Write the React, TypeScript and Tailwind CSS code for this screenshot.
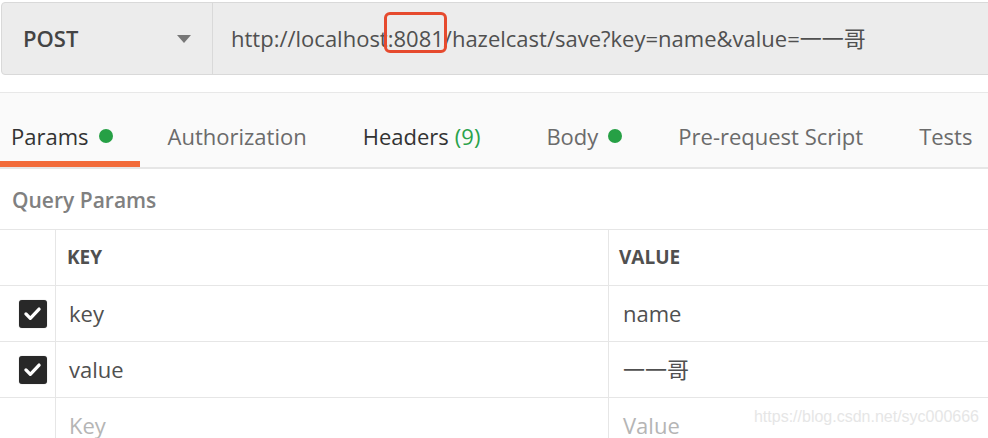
import React from 'react';

const font = { fontFamily: '"Open Sans", "Noto Sans CJK SC", sans-serif' };

const tabs = [
    { label: 'Params', dot: true, active: true },
    { label: 'Authorization' },
    { label: 'Headers', count: '(9)' },
    { label: 'Body', dot: true },
    { label: 'Pre-request Script' },
    { label: 'Tests' },
];

const rows = [
    { key: 'key', value: 'name', checked: true },
    { key: 'value', value: '一一哥', checked: true },
    { key: 'Key', value: 'Value', placeholder: true },
];

const Checkbox = () => (
    <div className="w-[28px] h-[28px] rounded-[3px] bg-[#282828] flex items-center justify-center shadow-[0_0_1px_rgba(0,0,0,0.4)]">
        <svg viewBox="0 0 24 24" className="w-[21px] h-[21px]" fill="none" stroke="white" strokeWidth="3.8" strokeLinecap="round" strokeLinejoin="round">
            <polyline points="4.5 12.5 9.5 17.5 19.5 7" />
        </svg>
    </div>
);

export default function App() {
    return (
        <div className="relative w-[988px] h-[438px] overflow-hidden bg-white" style={font}>
            {/* request bar */}
            <div className="pt-[2px] pl-[1px] h-[92px]">
                <div className="flex h-[73px] w-[1000px] bg-[#ececec] border border-[#d9d9d9] rounded-l-[4px]">
                    <div className="w-[211px] flex items-center justify-between pl-[21px] pr-[21px] border-r border-[#d9d9d9]">
                        <span className="text-[22px] font-semibold text-[#444]">POST</span>
                        <svg viewBox="0 0 14 8" className="w-[14px] h-[8px]">
                            <polygon points="0,0 14,0 7,8" fill="#777" />
                        </svg>
                    </div>
                    <div className="flex items-center pl-[18px] text-[22px] text-[#505050] whitespace-nowrap">
                        <span>http://localhost</span>
                        <span className="relative">
                            :8081
                            <span className="absolute -left-[4px] -right-[3px] -top-[10px] bottom-[2px] border-[3px] border-[#e64a2e] rounded-[6px]" />
                        </span>
                        <span>/hazelcast/save?key=name&amp;value=一一哥</span>
                    </div>
                </div>
            </div>

            {/* tabs */}
            <div className="flex h-[77px] bg-[#fafafa] border-t border-[#e8e8e8] border-b-2 border-b-[#e6e6e6] whitespace-nowrap">
                {tabs.map((t, i) => (
                    <div
                        key={t.label}
                        className={
                            i === 0
                                ? 'shrink-0 flex items-center h-full pt-[18px] pl-[11px] pr-[27px] border-b-[6px] border-[#f26b3a]'
                                : t.count
                                ? 'shrink-0 flex items-center h-full pt-[18px] pb-[6px] pl-[28px] pr-[38px]'
                                : 'shrink-0 flex items-center h-full pt-[18px] pb-[6px] px-[28px]'
                        }
                    >
                        <span className={`text-[22px] ${t.active || t.label === 'Headers' ? 'text-[#333]' : 'text-[#6b6b6b]'}`}>
                            {t.label}
                        </span>
                        {t.count && <span className="text-[22px] text-[#2aa24b] ml-[6px]">{t.count}</span>}
                        {t.dot && <span className="ml-[10px] w-[14px] h-[14px] rounded-full bg-[#26a045]" />}
                    </div>
                ))}
            </div>

            {/* query params */}
            <div className="h-[60px] flex items-center pl-[12px] pt-[3px]">
                <span className="text-[21px] font-semibold text-[#808080]">Query Params</span>
            </div>

            <div className="border-t border-[#e6e6e6]">
                <div className="grid grid-cols-[56px_553px_1fr] h-[56px] border-b border-[#e6e6e6]">
                    <div className="border-r border-[#e6e6e6]" />
                    <div className="flex items-center pl-[11px] border-r border-[#e6e6e6] text-[19px] font-bold text-[#505050]">KEY</div>
                    <div className="flex items-center pl-[10px] text-[19px] font-bold text-[#505050]">VALUE</div>
                </div>
                {rows.map((r, i) => (
                    <div key={i} className="grid grid-cols-[56px_553px_1fr] h-[56px] border-b border-[#e6e6e6]">
                        <div className="flex items-center justify-center pl-[10px] border-r border-[#e6e6e6]">
                            {r.checked && <Checkbox />}
                        </div>
                        <div className={`flex items-center pl-[13px] border-r border-[#e6e6e6] text-[22px] ${r.placeholder ? 'text-[#b5b5b5]' : 'text-[#505050]'}`}>
                            {r.key}
                        </div>
                        <div className={`flex items-center pl-[14px] text-[22px] ${r.placeholder ? 'text-[#b5b5b5]' : 'text-[#505050]'}`}>
                            {r.value}
                        </div>
                    </div>
                ))}
            </div>

            {/* watermark */}
            <div className="absolute right-[9px] bottom-[9px] text-[16px] text-[#e6e6e6]" style={{ fontFamily: '"Liberation Sans", Arial, sans-serif' }}>
                https://blog.csdn.net/syc000666
            </div>
        </div>
    );
}
